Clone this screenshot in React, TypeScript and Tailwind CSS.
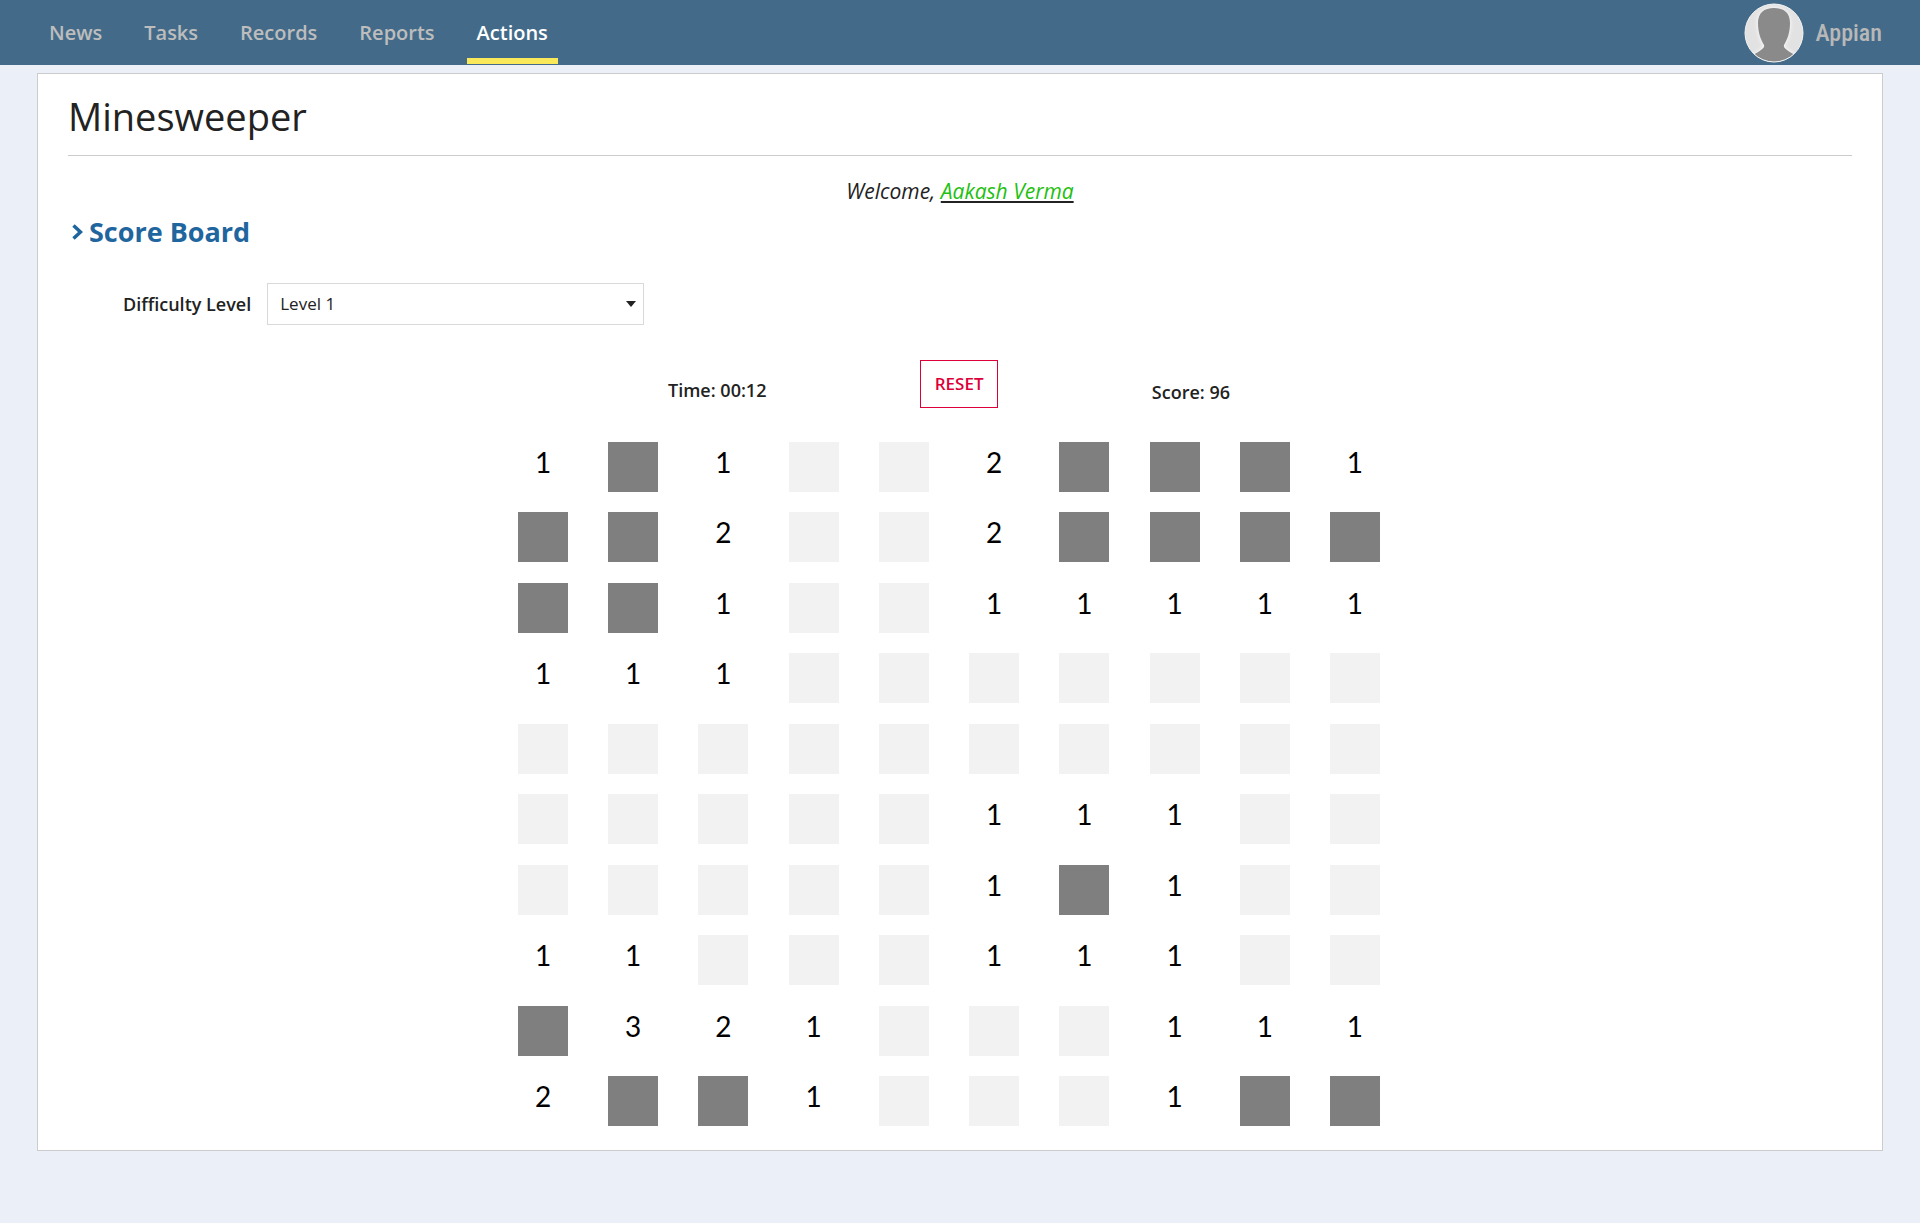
import React, { useState } from 'react';
import clsx from 'clsx';

const NAV_ITEMS = ['News', 'Tasks', 'Records', 'Reports', 'Actions'];

const LEVELS = ['Level 1', 'Level 2', 'Level 3'];

// "#" is a covered tile, "." an opened empty one, digits are mine counts
const BOARD = [
  '1#1..2###1',
  '##2..2####',
  '##1..11111',
  '111.......',
  '..........',
  '.....111..',
  '.....1#1..',
  '11...111..',
  '#321...111',
  '2##1...1##',
];

const Avatar = () => (
  <svg viewBox="0 0 60 60" className="h-[60px] w-[60px]" role="img" aria-label="User profile">
    <defs>
      <clipPath id="avatar-clip">
        <circle cx="30" cy="30" r="29" />
      </clipPath>
      <filter id="avatar-glow" x="-20%" y="-20%" width="140%" height="140%">
        <feGaussianBlur stdDeviation="2" />
      </filter>
    </defs>
    <circle cx="30" cy="30" r="29" fill="#e2e2e2" />
    <g clipPath="url(#avatar-clip)">
      <path
        d="M30 5C20 5 14 10 14 20c0 10 3 17 6 22 1 3-3 5-11 10L6 64h48l-3-12c-8-5-12-7-11-10 3-5 6-12 6-22C46 10 40 5 30 5z"
        fill="#fff"
        filter="url(#avatar-glow)"
      />
      <path
        d="M30 5C20 5 14 10 14 20c0 10 3 17 6 22 1 3-3 5-11 10L6 64h48l-3-12c-8-5-12-7-11-10 3-5 6-12 6-22C46 10 40 5 30 5z"
        fill="#8a8a8a"
      />
    </g>
    <circle cx="30" cy="30" r="29" fill="none" stroke="#f4f4f4" />
  </svg>
);

const Header = () => (
  <header className="flex h-[65px] items-stretch justify-between bg-[#436b89] pr-[38px] pl-[39px]">
    <nav className="flex gap-[22px]">
      {NAV_ITEMS.map((item) => {
        const isActive = item === 'Actions';
        return (
          <a
            key={item}
            href="#"
            aria-current={isActive ? 'page' : undefined}
            className={clsx(
              'mb-px flex items-center border-b-6 px-2.5 pt-2 text-xl font-semibold',
              isActive ? 'border-[#f8e85a] text-white' : 'border-transparent text-[#bdbdbd]'
            )}
          >
            {item}
          </a>
        );
      })}
    </nav>
    <div className="flex items-center gap-3">
      <Avatar />
      <span className="font-['Roboto_Condensed','Roboto',sans-serif] text-2xl leading-none font-medium text-[#b8b8b8]">
        Appian
      </span>
    </div>
  </header>
);

const Tile = ({ value, label }: { value: string; label: string }) => (
  <button
    type="button"
    aria-label={label}
    className={clsx(
      "flex h-[50px] w-[50px] items-center justify-center pb-2.5 font-['Lato',sans-serif] text-[28px] leading-none text-black",
      value === '#' && 'bg-[#7f7f7f]',
      value === '.' && 'bg-[#f2f2f2]'
    )}
  >
    {value !== '#' && value !== '.' ? value : null}
  </button>
);

const App = () => {
  const [level, setLevel] = useState(LEVELS[0]);

  return (
    <div className="min-h-screen bg-[#ebeff7] font-['Open_Sans','Noto_Sans',sans-serif] text-[#222222]">
      <Header />

      <main className="mx-[37px] mt-2 border border-[#cccccc] bg-white px-[30px] pb-6">
        <h1 className="border-b border-[#cccccc] pt-4 pb-3 text-[38px] leading-[53px] font-medium">
          Minesweeper
        </h1>

        <p className="mt-5 text-center text-[21px] leading-[30px] italic">
          Welcome,{' '}
          <a
            href="#"
            className="text-[#22c010] underline decoration-[#222222] decoration-2 underline-offset-2"
          >
            Aakash Verma
          </a>
        </p>

        <h2 className="mt-1.5">
          <button
            type="button"
            aria-expanded={false}
            className="flex items-center gap-1.5 pl-1 text-[27px] leading-10 font-bold text-[#1f659e]"
          >
            <svg viewBox="0 0 11 16" className="h-4 w-[11px]" fill="none" stroke="currentColor" strokeWidth="3.500">
              <path d="M1.500 1.500L8.500 8L1.500 14.500" />
            </svg>
            Score Board
          </button>
        </h2>

        <div className="mt-[31px] flex items-center gap-4 pl-[55px]">
          <label htmlFor="difficulty" className="text-lg font-semibold">
            Difficulty Level
          </label>
          <div className="relative w-[377px]">
            <select
              id="difficulty"
              value={level}
              onChange={(e) => setLevel(e.target.value)}
              className="h-[42px] w-full appearance-none border border-[#d9d9d9] bg-white px-3 text-[17px]"
            >
              {LEVELS.map((name) => (
                <option key={name}>{name}</option>
              ))}
            </select>
            <svg
              viewBox="0 0 10 6"
              className="pointer-events-none absolute top-[18px] right-2 h-1.5 w-2.5"
              fill="#222222"
            >
              <path d="M0 0H10L5 6Z" />
            </svg>
          </div>
        </div>

        {/* Game status */}
        <div className="mt-[35px] flex justify-center pr-[22px]">
          <div className="flex w-[562px] items-center justify-between">
            <p className="pt-3 text-lg font-semibold">Time: 00:12</p>
            <button
              type="button"
              className="h-12 w-[78px] border border-[#dd0038] text-[17px] font-semibold text-[#dd0038]"
            >
              RESET
            </button>
            <p className="pt-4 text-lg font-semibold">Score: 96</p>
          </div>
        </div>

        <div className="mt-[34px] flex justify-center pr-[22px]">
          <div className="grid h-[684px] w-[862px] grid-cols-[repeat(10,50px)] content-between justify-between">
            {BOARD.map((row, y) =>
              row.split('').map((value, x) => (
                <Tile key={`${y}-${x}`} value={value} label={`Row ${y + 1}, column ${x + 1}`} />
              ))
            )}
          </div>
        </div>
      </main>
    </div>
  );
};

export default App;
